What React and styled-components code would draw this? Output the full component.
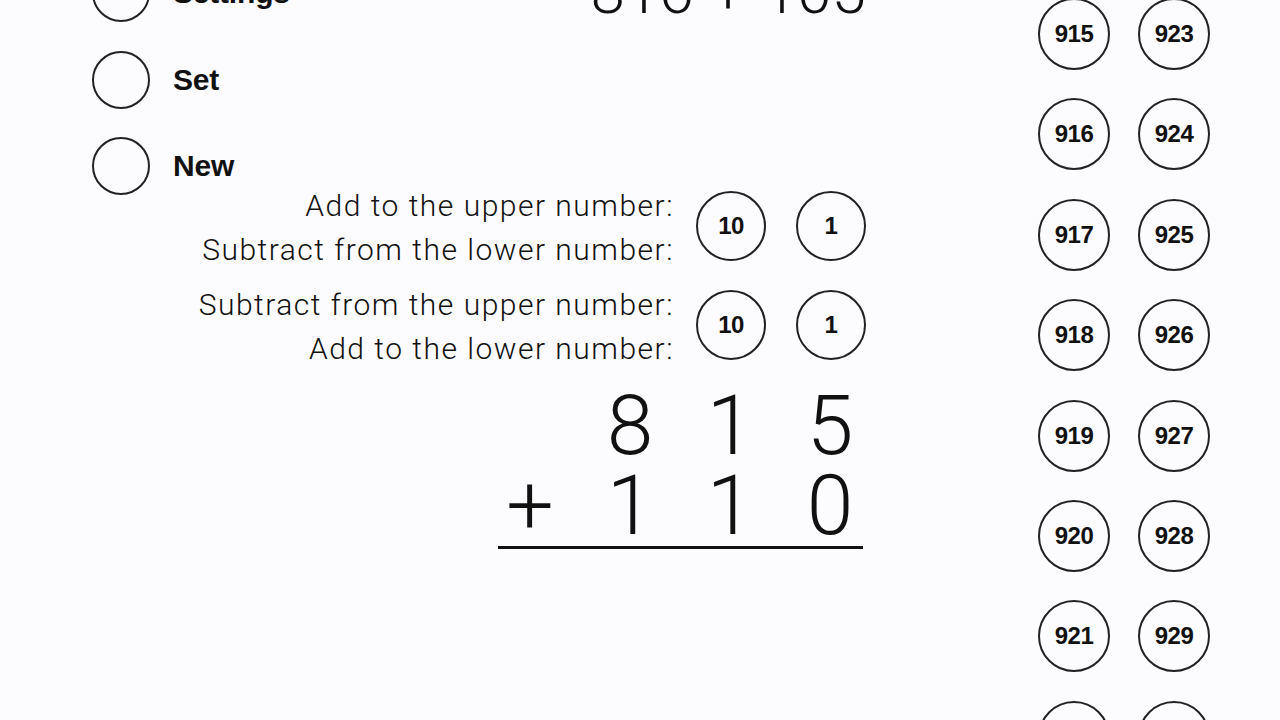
import React from 'react'
import styled, { createGlobalStyle } from 'styled-components'

const GlobalStyle = createGlobalStyle`
  html, body {
    margin: 0;
    padding: 0;
    background: #fcfbfd;
    overflow: hidden;
  }
  body {
    font-family: "Liberation Sans", Arial, sans-serif;
    color: #111;
  }
`

const menu = ['Settings', 'Set', 'New']
const groups = [
  ['Add to the upper number:', 'Subtract from the lower number:'],
  ['Subtract from the upper number:', 'Add to the lower number:'],
]
const leftAnswers = [915, 916, 917, 918, 919, 920, 921, 922]
const rightAnswers = [923, 924, 925, 926, 927, 928, 929, 930]

const App = () => {
  const answers = []
  leftAnswers.forEach((n, i) => {
    answers.push(n, rightAnswers[i])
  })

  return (
    <>
      <GlobalStyle />
      <Stage>
        <Menu>
          {menu.map((m) => (
            <MenuItem key={m}>
              <Ring size={58} />
              <MenuLabel>{m}</MenuLabel>
            </MenuItem>
          ))}
        </Menu>

        <Problem>
          <Expression>816 + 105</Expression>

          {groups.map((g, i) => (
            <Group key={i} first={i === 0}>
              <Hints>
                <span>{g[0]}</span>
                <span>{g[1]}</span>
              </Hints>
              <StepRing size={70}>10</StepRing>
              <StepRing size={70}>1</StepRing>
            </Group>
          ))}

          <Sum>
            <Digit />
            <Digit>8</Digit>
            <Digit>1</Digit>
            <Digit>5</Digit>
            <Digit>+</Digit>
            <Digit>1</Digit>
            <Digit>1</Digit>
            <Digit>0</Digit>
            <Rule />
          </Sum>
        </Problem>

        <Answers>
          {answers.map((n) => (
            <StepRing key={n} size={72}>{n}</StepRing>
          ))}
        </Answers>
      </Stage>
    </>
  )
}

const Stage = styled.div`
  display: grid;
  grid-template-columns: 92px 774px 172px 172px 1fr;
  margin-top: -60px;
  height: 840px;
`

const Menu = styled.div`
  grid-row: 1;
  grid-column: 2;
  justify-self: start;
  align-self: start;
  display: flex;
  flex-direction: column;
  gap: 28.5px;
  margin-top: 24px;
  z-index: 1;
`

const MenuItem = styled.div`
  display: flex;
  align-items: center;
  gap: 23px;
`

const Ring = styled.div`
  box-sizing: border-box;
  width: ${(p) => p.size}px;
  height: ${(p) => p.size}px;
  border: 2px solid #222;
  border-radius: 50%;
  flex: none;
`

const MenuLabel = styled.span`
  font-weight: 700;
  font-size: 30px;
  line-height: 1;
  letter-spacing: -0.2px;
`

const Problem = styled.div`
  grid-row: 1;
  grid-column: 2;
  display: flex;
  flex-direction: column;
  align-items: flex-end;
  font-family: Roboto, "Liberation Sans", sans-serif;
  font-weight: 300;
`

const Expression = styled.div`
  font-size: 62px;
  line-height: 64px;
  margin-top: 20px;
  white-space: pre;
  word-spacing: 2px;
`

const Group = styled.div`
  display: flex;
  align-items: center;
  gap: 30px;
  margin-top: ${(p) => (p.first ? '158px' : '11px')};
`

const Hints = styled.div`
  display: flex;
  flex-direction: column;
  align-items: flex-end;
  font-size: 30px;
  line-height: 44px;
  letter-spacing: 1.5px;
  margin-right: -8px;
  padding-top: 2px;
  margin-bottom: -2px;
  white-space: nowrap;
`

const StepRing = styled(Ring)`
  display: flex;
  align-items: center;
  justify-content: center;
  font-family: "Liberation Sans", Arial, sans-serif;
  font-weight: 700;
  font-size: 24px;
  letter-spacing: -0.5px;
  color: #111;
`

const Sum = styled.div`
  display: grid;
  grid-template-columns: repeat(4, 100px);
  margin-top: 17px;
  margin-right: -14px;
`

const Digit = styled.div`
  font-size: 84px;
  line-height: 80px;
  height: 80px;
  text-align: center;
`

const Rule = styled.div`
  grid-column: 1 / -1;
  height: 3px;
  background: #111;
  margin: 0 17px 0 18px;
`

const Answers = styled.div`
  grid-row: 1;
  grid-column: 4;
  justify-self: start;
  align-self: start;
  display: grid;
  grid-template-columns: 72px 72px;
  column-gap: 28px;
  row-gap: 28.4px;
  margin-top: 58px;
`

export default App
